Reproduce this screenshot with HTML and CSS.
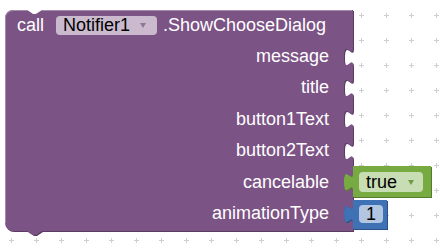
FILE: index.html
```html
<!DOCTYPE html>
<html lang="en">
<head>
    <meta charset="UTF-8">
    <title>Notifier1.ShowChooseDialog</title>
    <link rel="stylesheet" href="styles.css">
</head>
<body>
    <div class="workspace">
        <!-- fondo con rejilla -->
        <svg class="canvas" width="443" height="247" viewBox="0 0 443 247">
            <defs>
                <pattern id="grid" x="9" y="13" width="25" height="25" patternUnits="userSpaceOnUse">
                    <rect x="0" y="2" width="5" height="1" class="cross"/>
                    <rect x="2" y="0" width="1" height="5" class="cross"/>
                </pattern>
            </defs>
            <rect width="443" height="247" fill="url(#grid)"/>

            <!-- bloque call -->
            <g>
                <path class="method-dark" transform="translate(1,1)" d="M5,18 A8,8 0 0 1 13,10 H27 l6,4 h3 l6,-4 H353 V48 c0,12 -9,-10 -9,9 s9,-3 9,9 V79 c0,12 -9,-10 -9,9 s9,-3 9,9 V110 c0,12 -9,-10 -9,9 s9,-3 9,9 V142 c0,12 -9,-10 -9,9 s9,-3 9,9 V173 c0,12 -9,-10 -9,9 s9,-3 9,9 V205 c0,12 -9,-10 -9,9 s9,-3 9,9 V231 H42 l-6,4 h-3 l-6,-4 H13 A8,8 0 0 1 5,223 Z"/>
                <path class="method-fill" d="M5,18 A8,8 0 0 1 13,10 H27 l6,4 h3 l6,-4 H353 V48 c0,12 -9,-10 -9,9 s9,-3 9,9 V79 c0,12 -9,-10 -9,9 s9,-3 9,9 V110 c0,12 -9,-10 -9,9 s9,-3 9,9 V142 c0,12 -9,-10 -9,9 s9,-3 9,9 V173 c0,12 -9,-10 -9,9 s9,-3 9,9 V205 c0,12 -9,-10 -9,9 s9,-3 9,9 V231 H42 l-6,4 h-3 l-6,-4 H13 A8,8 0 0 1 5,223 Z"/>
                <path class="method-light" d="M5.5,223 V18 A7.5,7.5 0 0 1 13,10.5 H27 M42,10.5 H352"/>
            </g>

            <!-- bloque true -->
            <path class="logic-dark" transform="translate(1,1)" d="M353,166 H431 V197 H353 V191 c0,-12 -9,10 -9,-9 s9,3 9,-9 Z"/>
            <path class="logic-fill" d="M353,166 H431 V197 H353 V191 c0,-12 -9,10 -9,-9 s9,3 9,-9 Z"/>

            <!-- bloque 1 -->
            <path class="math-dark" transform="translate(1,1)" d="M353,200 H387 V229 H353 V223 c0,-12 -9,10 -9,-9 s9,3 9,-9 Z"/>
            <path class="math-fill" d="M353,200 H387 V229 H353 V223 c0,-12 -9,10 -9,-9 s9,3 9,-9 Z"/>
        </svg>

        <div class="block method">
            <div class="head">
                <span>call</span>
                <span class="field dropdown">Notifier1<span class="arrow"></span></span>
                <span class="method-name">.ShowChooseDialog</span>
            </div>
            <div class="args">
                <div class="arg">message</div>
                <div class="arg">title</div>
                <div class="arg">button1Text</div>
                <div class="arg">button2Text</div>
                <div class="arg">cancelable</div>
                <div class="arg">animationType</div>
            </div>
        </div>

        <div class="block logic">
            <span class="field bool">true<span class="arrow"></span></span>
        </div>

        <div class="block math">
            <span class="field number">1</span>
        </div>
    </div>
</body>
</html>
```
FILE: styles.css
```css
body {
    margin: 0;
    padding: 0;
    background-color: #ffffff;
    font-family: "Liberation Sans", Arial, sans-serif;
}
.workspace {
    position: relative;
    width: 443px;
    height: 247px;
    overflow: hidden;
}
.canvas {
    position: absolute;
    top: 0;
    left: 0;
    display: block;
}
.cross {
    fill: #cfcfcf;
}
.method-fill {
    fill: #7c5385;
}
.method-dark {
    fill: #5a3b62;
}
.method-light {
    fill: none;
    stroke: #a58aad;
    stroke-width: 1;
}
.logic-fill {
    fill: #77ab41;
}
.logic-dark {
    fill: #557c2d;
}
.math-fill {
    fill: #3f71b5;
}
.math-dark {
    fill: #2c5086;
}
.block {
    position: absolute;
    font-size: 18px;
    color: #ffffff;
}
.method {
    left: 5px;
    top: 10px;
    width: 348px;
    height: 222px;
}
.head {
    display: flex;
    align-items: center;
    height: 31px;
    padding-left: 12px;
}
.field {
    display: flex;
    align-items: center;
    box-sizing: border-box;
    border-radius: 4px;
    color: #000000;
}
.dropdown {
    margin-left: 12px;
    height: 19px;
    width: 101px;
    padding-left: 7px;
    background-color: #cbbace;
}
.arrow {
    width: 0;
    height: 0;
    margin-left: 10px;
    border-left: 3.5px solid transparent;
    border-right: 3.5px solid transparent;
    border-top: 5px solid #8f7797;
}
.method-name {
    margin-left: 6px;
}
.args {
    display: flex;
    flex-direction: column;
    align-items: flex-end;
    padding-right: 24px;
}
.arg {
    height: 31.4px;
    line-height: 31.4px;
}
.logic {
    left: 353px;
    top: 166px;
    width: 79px;
    height: 32px;
}
.bool {
    margin: 6px 0 0 6px;
    width: 64px;
    height: 20px;
    padding-left: 7px;
    background-color: #c8ddb3;
}
.bool .arrow {
    margin-left: 11px;
    border-top-color: #6f9a45;
}
.math {
    left: 353px;
    top: 200px;
    width: 35px;
    height: 31px;
}
.number {
    margin: 5px 0 0 6px;
    width: 24px;
    height: 18px;
    justify-content: center;
    background-color: #b2c6e1;
}
```
